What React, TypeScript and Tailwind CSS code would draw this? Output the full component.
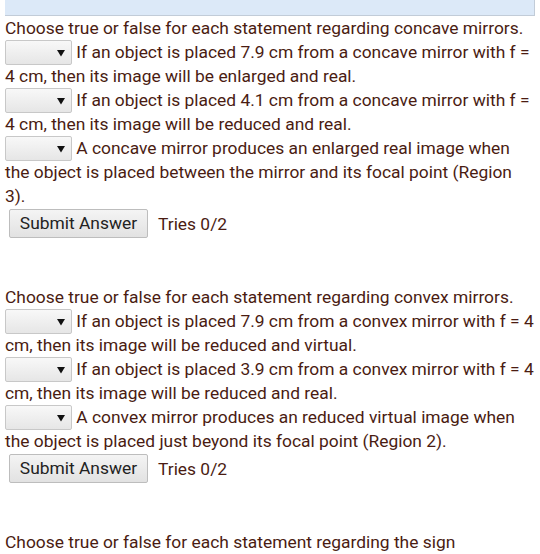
import React from "react";

function Sel() {
  return (
    <span className="-mb-[1px] inline-flex h-[25px] w-[67px] items-center justify-end rounded-[2px] border border-[#c8c8c8] bg-gradient-to-b from-[#f8f8f8] to-[#e6e6e6] pr-[6px] align-top">
      <svg width="8" height="8" viewBox="0 0 8 8" aria-hidden="true">
        <path d="M0 1h8L4 7.5z" fill="#111" />
      </svg>
    </span>
  );
}

function Statement({ text }: { text: string }) {
  return (
    <div>
      <Sel /> {text}
    </div>
  );
}

function SubmitRow() {
  return (
    <div className="mt-[1px] flex items-center gap-[10px] pl-[4px]">
      <button
        type="button"
        className="h-[29px] w-[139px] rounded-[2px] border border-[#bdbdbd] bg-gradient-to-b from-[#f4f4f4] to-[#e2e2e2] text-[17.4px] leading-none text-[#222]"
      >
        Submit Answer
      </button>
      <span>Tries 0/2</span>
    </div>
  );
}

const concave = [
  "If an object is placed 7.9 cm from a concave mirror with f = 4 cm, then its image will be enlarged and real.",
  "If an object is placed 4.1 cm from a concave mirror with f = 4 cm, then its image will be reduced and real.",
  "A concave mirror produces an enlarged real image when the object is placed between the mirror and its focal point (Region 3).",
];

const convex = [
  "If an object is placed 7.9 cm from a convex mirror with f = 4 cm, then its image will be reduced and virtual.",
  "If an object is placed 3.9 cm from a convex mirror with f = 4 cm, then its image will be reduced and real.",
  "A convex mirror produces an reduced virtual image when the object is placed just beyond its focal point (Region 2).",
];

export default function App() {
  return (
    <div className="min-h-[554px] bg-white px-[5px] font-['Roboto',sans-serif] text-[17.4px] leading-[24px] text-[#4a1c12]">
      <div className="h-[16px] border-b border-r border-[#c2ccd8] bg-[#dce9f8]" />

      <div>
        <div>Choose true or false for each statement regarding concave mirrors.</div>
        {concave.map((t) => (
          <Statement key={t} text={t} />
        ))}
        <SubmitRow />
      </div>

      <div className="mt-[47px]">
        <div>Choose true or false for each statement regarding convex mirrors.</div>
        {convex.map((t) => (
          <Statement key={t} text={t} />
        ))}
        <SubmitRow />
      </div>

      <div className="mt-[47px]">
        <div>Choose true or false for each statement regarding the sign</div>
      </div>
    </div>
  );
}
